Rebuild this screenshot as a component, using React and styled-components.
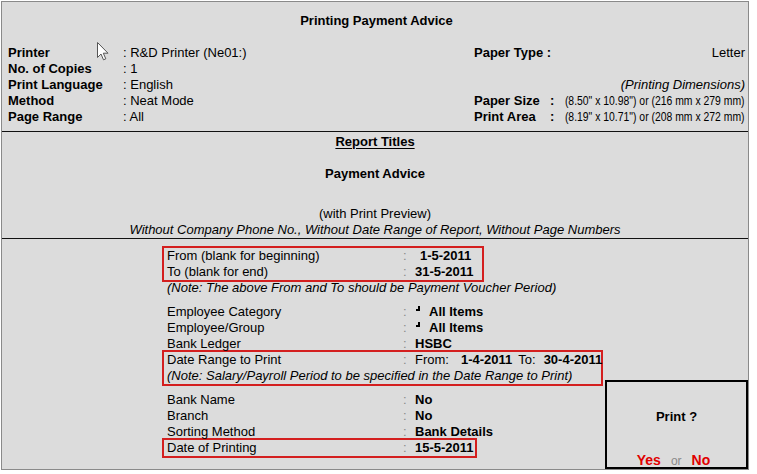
import React from 'react';
import styled, { createGlobalStyle } from 'styled-components';

const GlobalStyle = createGlobalStyle`
  body {
    margin: 0;
    background: #fff;
    font-family: "Liberation Sans", Arial, sans-serif;
    font-size: 13px;
    color: #000;
  }
`;

const Panel = styled.div`
  position: relative;
  box-sizing: border-box;
  width: 748px;
  margin: 1px 0 0 1px;
  border: 1px solid #8a8a8a;
  background: #dcdcdc;
  line-height: 16px;
`;

const Section = styled.div`
  border-bottom: ${(p) => (p.$last ? 'none' : '1px solid #111')};
`;

const Header = styled(Section)`
  padding: 11px 3px 6px 6px;
`;

const Title = styled.div`
  text-align: center;
  font-weight: bold;
  margin-bottom: 16px;
`;

const Columns = styled.div`
  display: flex;
  justify-content: space-between;
`;

const InfoGrid = styled.div`
  display: grid;
  grid-template-columns: 115px auto;
  grid-auto-rows: 16px;

  b {
    font-weight: bold;
  }
`;

const RightCol = styled.div`
  width: 271px;
  display: flex;
  flex-direction: column;
`;

const RightRow = styled.div`
  height: 16px;
  display: flex;
  justify-content: ${(p) => p.$justify || 'space-between'};
  align-items: center;
  white-space: nowrap;
  font-style: ${(p) => (p.$italic ? 'italic' : 'normal')};
`;

const DimLabel = styled.span`
  font-weight: bold;
  width: 76px;
  flex: none;
`;

const DimValue = styled.span`
  flex: 1;
  min-width: 0;
  display: flex;
  justify-content: flex-end;
`;

const Narrow = styled.span`
  flex: none;
  white-space: nowrap;
  transform: scaleX(0.8);
  transform-origin: right center;
`;

const Cursor = styled.svg`
  position: absolute;
  left: 95px;
  top: 40px;
`;

const Titles = styled(Section)`
  padding-top: 2px;
  text-align: center;
`;

const TitleLine = styled.div`
  font-weight: ${(p) => (p.$bold ? 'bold' : 'normal')};
  font-style: ${(p) => (p.$italic ? 'italic' : 'normal')};
  margin-top: ${(p) => p.$gap || 0}px;

  u {
    text-underline-offset: 2px;
  }
`;

const Options = styled(Section)`
  display: flex;
  align-items: flex-end;
`;

const Form = styled.div`
  flex: 1;
  padding: 9px 0 13px 165px;
`;

const Row = styled.div`
  display: grid;
  grid-template-columns: 236px 12px auto;
  height: 16px;
  margin-top: ${(p) => p.$gap || 0}px;
`;

const Colon = styled.span`
  color: #8a8a8a;
`;

const Value = styled.span`
  font-weight: ${(p) => (p.$bold ? 'bold' : 'normal')};
  padding-left: ${(p) => p.$indent || 0}px;
  white-space: nowrap;
`;

const Note = styled.div`
  font-style: italic;
  height: 16px;
  white-space: nowrap;
  margin-top: ${(p) => p.$gap || 0}px;
`;

const Highlight = styled.div`
  box-sizing: border-box;
  width: ${(p) => p.$width}px;
  margin: -2px 0 -2px -5px;
  padding-left: 3px;
  border: 2px solid #d41f1f;
`;

const Corner = styled.span`
  display: inline-block;
  width: 4px;
  height: 5px;
  border-right: 2px solid #000;
  border-bottom: 2px solid #000;
  box-sizing: border-box;
  vertical-align: 5px;
  margin: 0 9px 0 1px;
`;

const Spaced = styled.span`
  margin-left: ${(p) => p.$left || 0}px;
  font-weight: ${(p) => (p.$bold ? 'bold' : 'normal')};
`;

const PrintBox = styled.div`
  box-sizing: border-box;
  width: 143px;
  height: 89px;
  border: 2px solid #000;
  padding: 28px 6px 0 0;
  display: flex;
  flex-direction: column;
  align-items: center;
  line-height: 14px;
  flex: none;
`;

const PrintAsk = styled.div`
  font-weight: bold;
  margin: 0 0 29px 6px;
`;

const Choices = styled.div`
  display: flex;
  align-items: baseline;
  gap: 10px;
`;

const Choice = styled.span`
  color: #e00000;
  font-weight: bold;
  font-size: 14px;
`;

const Or = styled.span`
  color: #8a8a8a;
  font-size: 12px;
`;

const printerInfo = [
  ['Printer', 'R&D Printer (Ne01:)'],
  ['No. of Copies', '1'],
  ['Print Language', 'English'],
  ['Method', 'Neat Mode'],
  ['Page Range', 'All'],
];

const Field = ({ label, children, gap }) => (
  <Row $gap={gap}>
    <span>{label}</span>
    <Colon>:</Colon>
    {children}
  </Row>
);

const App = () => {
  return (
    <>
      <GlobalStyle />
      <Panel>
        <Header>
          <Title>Printing Payment Advice</Title>
          <Columns>
            <InfoGrid>
              {printerInfo.map(([label, value]) => (
                <React.Fragment key={label}>
                  <b>{label}</b>
                  <span>: {value}</span>
                </React.Fragment>
              ))}
            </InfoGrid>
            <RightCol>
              <RightRow>
                <b>Paper Type :</b>
                <span>Letter</span>
              </RightRow>
              <RightRow />
              <RightRow $justify="flex-end" $italic>
                (Printing Dimensions)
              </RightRow>
              <RightRow>
                <DimLabel>Paper Size</DimLabel>
                <b>:</b>
                <DimValue>
                  <Narrow>(8.50" x 10.98") or (216 mm x 279 mm)</Narrow>
                </DimValue>
              </RightRow>
              <RightRow>
                <DimLabel>Print Area</DimLabel>
                <b>:</b>
                <DimValue>
                  <Narrow>(8.19" x 10.71") or (208 mm x 272 mm)</Narrow>
                </DimValue>
              </RightRow>
            </RightCol>
          </Columns>
          <Cursor width="13" height="19" viewBox="0 0 13 19">
            <path
              d="M0.5 0.5 L0.5 15.5 L4 12 L6.5 17.8 L8.8 16.8 L6.3 11.2 L11 11.2 Z"
              fill="#fff"
              stroke="#555"
              strokeWidth="1"
            />
          </Cursor>
        </Header>

        <Titles>
          <TitleLine $bold>
            <u>Report Titles</u>
          </TitleLine>
          <TitleLine $bold $gap={16}>
            Payment Advice
          </TitleLine>
          <TitleLine $gap={24}>(with Print Preview)</TitleLine>
          <TitleLine $italic>
            Without Company Phone No., Without Date Range of Report, Without Page Numbers
          </TitleLine>
        </Titles>

        <Options $last>
          <Form>
            <Highlight $width={322}>
              <Field label="From (blank for beginning)">
                <Value $bold $indent={5}>1-5-2011</Value>
              </Field>
              <Field label="To (blank for end)">
                <Value $bold>31-5-2011</Value>
              </Field>
            </Highlight>
            <Note>(Note: The above From and To should be Payment Voucher Period)</Note>

            <Field label="Employee Category" gap={8}>
              <Value $bold>
                <Corner />
                All Items
              </Value>
            </Field>
            <Field label="Employee/Group">
              <Value $bold>
                <Corner />
                All Items
              </Value>
            </Field>
            <Field label="Bank Ledger">
              <Value $bold>HSBC</Value>
            </Field>
            <Highlight $width={441}>
              <Field label="Date Range to Print">
                <Value>
                  From:
                  <Spaced $left={12} $bold>1-4-2011</Spaced>
                  <Spaced $left={6}>To:</Spaced>
                  <Spaced $left={8} $bold>30-4-2011</Spaced>
                </Value>
              </Field>
              <Note>(Note: Salary/Payroll Period to be specified in the Date Range to Print)</Note>
            </Highlight>

            <Field label="Bank Name" gap={8}>
              <Value $bold>No</Value>
            </Field>
            <Field label="Branch">
              <Value $bold>No</Value>
            </Field>
            <Field label="Sorting Method">
              <Value $bold>Bank Details</Value>
            </Field>
            <Highlight $width={315}>
              <Field label="Date of Printing">
                <Value $bold>15-5-2011</Value>
              </Field>
            </Highlight>
          </Form>
          <PrintBox>
            <PrintAsk>Print ?</PrintAsk>
            <Choices>
              <Choice>Yes</Choice>
              <Or>or</Or>
              <Choice>No</Choice>
            </Choices>
          </PrintBox>
        </Options>
      </Panel>
    </>
  );
};

export default App;
